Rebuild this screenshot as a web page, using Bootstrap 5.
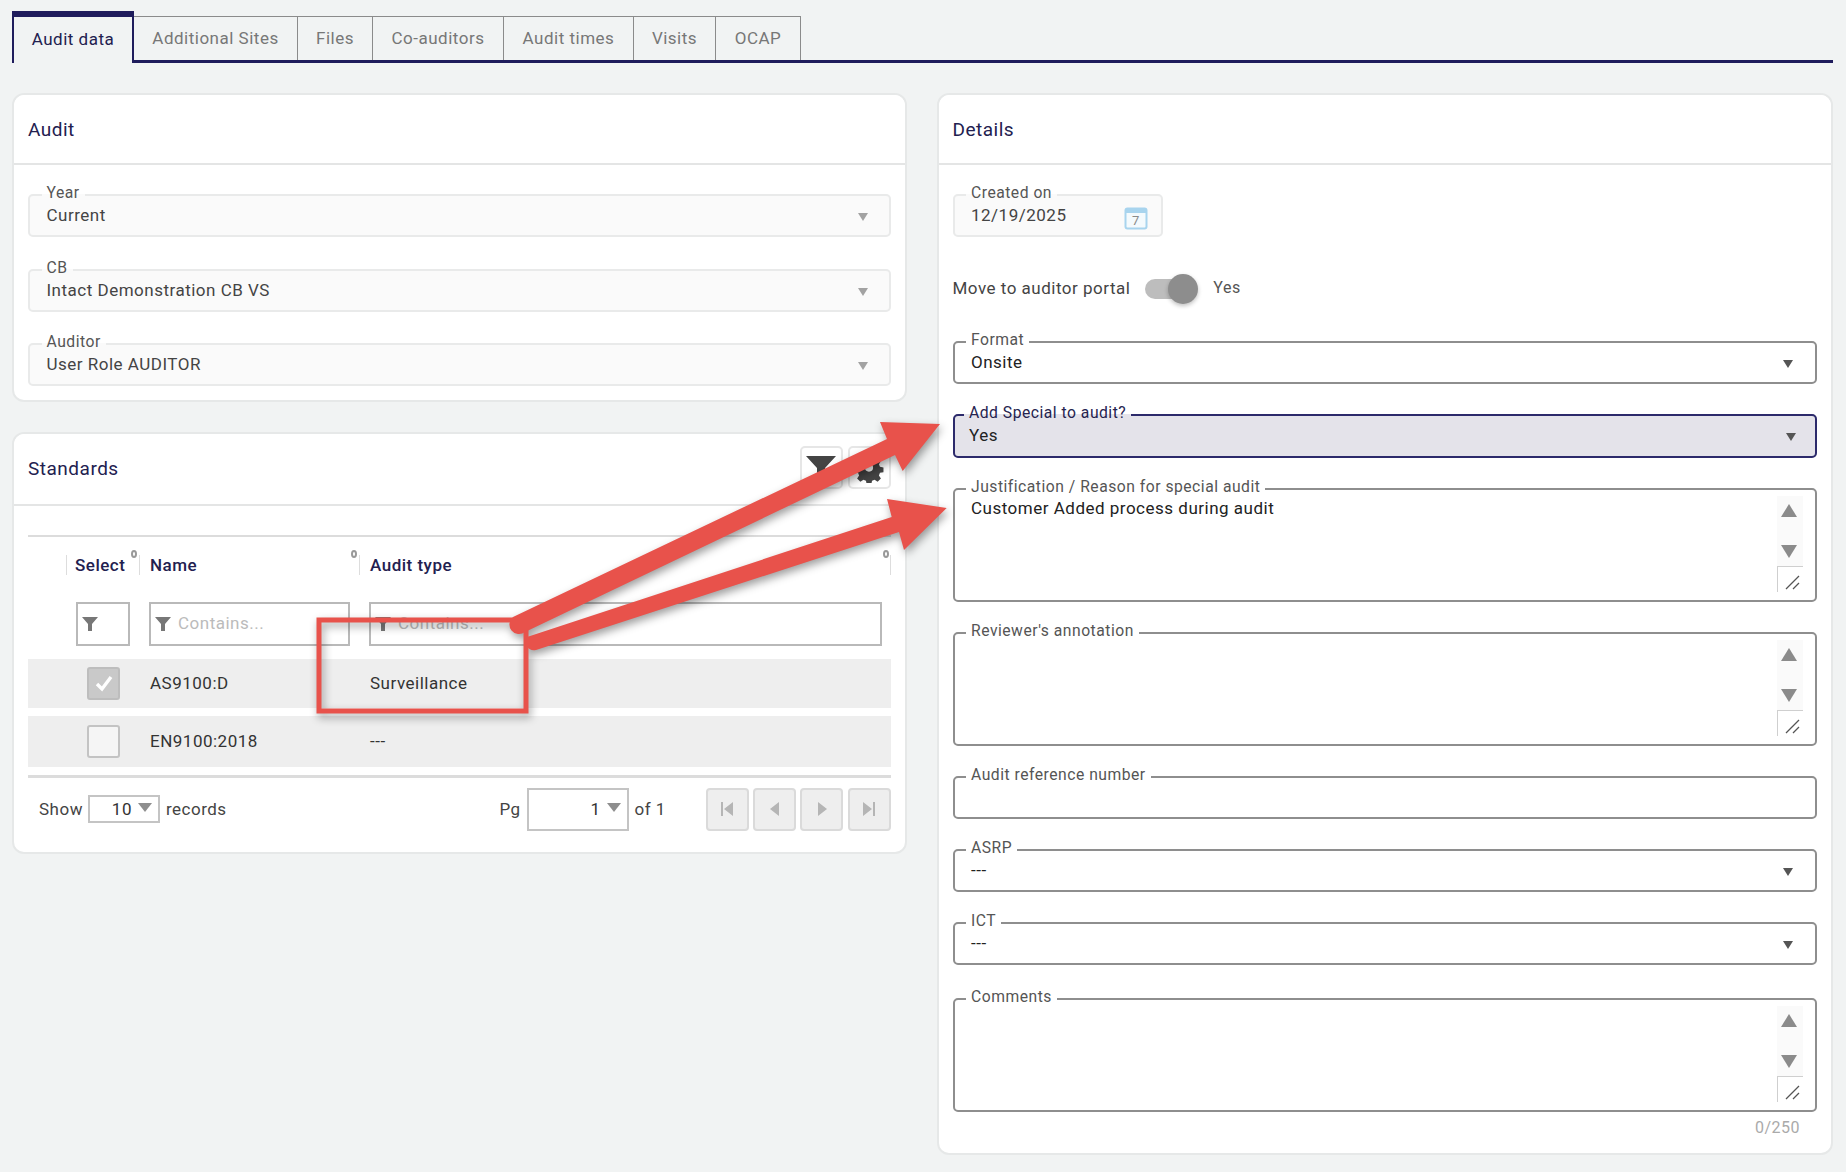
<!DOCTYPE html>
<html lang="en">
<head>
    <meta charset="UTF-8">
    <meta name="viewport" content="width=device-width, initial-scale=1">
    <title>Audit data</title>
    <link href="https://cdn.jsdelivr.net/npm/bootstrap@5.3.2/dist/css/bootstrap.min.css" rel="stylesheet">
    <style>
        html, body { height: 100%; }
        body {
            background-color: #f1f3f3;
            font-family: Roboto, "Liberation Sans", sans-serif;
            font-size: 17px;
            letter-spacing: .5px;
            color: #333;
            overflow: hidden;
        }
        .audit-page { position: relative; padding: 11px 13px 0 12px; height: 1172px; }

        /* tabs */
        .audit-tabs { border-bottom: 3px solid #1f1c5c; height: 52px; flex-wrap: nowrap; align-items: flex-end; }
        .audit-tabs .nav-link {
            height: 44px; margin: 0; padding: 0; line-height: 42px; border-radius: 0; text-align: center;
            background: #f1f3f3; color: #777; border: 1.5px solid #8b8b8b; border-bottom: 0; border-left-width: 0;
        }
        .audit-tabs .nav-link.active {
            height: 52px; width: 122px; padding: 1px 0 0 0; margin-bottom: -3px;
            color: #22204f; border: 2px solid #1f1c5c; border-top: 6px solid #1f1c5c; border-bottom: 0;
            background: #f1f3f3; line-height: 42px;
        }
        .tab-a { width: 164px; } .tab-b { width: 75px; } .tab-c { width: 131px; }
        .tab-d { width: 130px; } .tab-e { width: 82px; } .tab-f { width: 85px; }

        .side-cols { gap: 30px; margin-top: 30px; }
        .side-left { flex: 0 0 894.5px; min-width: 0; }
        .side-right { flex: 1 1 0; min-width: 0; }

        /* cards */
        .panel { border: 2px solid #e6e8e8; border-radius: 12px; background: #fff; }
        .panel .card-header {
            background: #fff; border-bottom: 2px solid #e4e5e5; height: 70px; padding: 2px 14px 0;
            color: #22204f; font-size: 19px; display: flex; align-items: center; border-radius: 11px 11px 0 0;
        }
        .panel .card-body { padding: 20px 14px 14px; }
        .standards-card { margin-top: 29.5px; }
        .standards-card .card-header { height: 72px; padding-top: 0; }

        /* outlined fields */
        .fields { display: flex; flex-direction: column; gap: 22.7px; }
        .fields-right { gap: 21px; }
        .fld {
            border: 2px solid #8e8e8e; border-radius: 5px; padding: 0 16.5px 10px; background: #fff;
            position: relative; line-height: 20px; color: #222;
        }
        .fld > legend {
            float: none; width: auto; font-size: 15.7px; line-height: 16px; color: #555;
            margin: 0 0 0 -5px; padding: 0 5px 4px 5px;
        }
        .fld-read { border-color: #e9eaea; background: #fafafa; color: #444; }
        .fld-active { border-color: #2c2a6b; background: #e4e3ea; padding-bottom: 11px; }
        .fld-active > legend { color: #26244f; margin-left: -7px; }
        .fld-active > .fld-val { margin-left: -2px; }
        .fld-val { height: 20px; }
        .fld-area { padding-bottom: 0; height: 123px; }
        .fld-area > .fld-val { margin-top: -1.5px; }
        .fld-last { margin-top: 3px; }
        .fld-date { width: 210px; }
        .date-ico { right: 13px; top: 2px; }
        .caret-down {
            position: absolute; right: 22px; top: 8px; width: 0; height: 0;
            border-left: 5px solid transparent; border-right: 5px solid transparent; border-top: 8px solid #555;
        }
        .fld-read .caret-down { border-top-color: #a2a2a2; right: 21px; }
        .fld-active .caret-down { right: 19px; }

        .fake-scroll { position: absolute; right: 12px; top: -3px; width: 26px; height: 96px; background: #fafafa; }
        .fake-scroll .up, .fake-scroll .dn { position: absolute; left: 4px; width: 0; height: 0; border-left: 8.5px solid transparent; border-right: 8.5px solid transparent; }
        .fake-scroll .up { top: 8px; border-bottom: 13px solid #8b8b8b; }
        .fake-scroll .dn { top: 49px; border-top: 13px solid #8b8b8b; }
        .grip { position: absolute; left: 0; bottom: 0; width: 26px; height: 26px; background: #fff; border: 1.5px solid #cfcfcf; border-width: 1.5px 0 0 1.5px; }
        .grip svg { display: block; position: absolute; right: 2px; bottom: 2px; }

        .portal-row { height: 40px; margin: 32px 0 23px; position: relative; }
        .toggle-track { width: 43px; height: 20px; border-radius: 10px; background: #bdbdbd; margin-left: 15px; position: relative; flex: none; }
        .toggle-knob { position: absolute; right: -10px; top: -5px; width: 30px; height: 30px; border-radius: 50%; background: #8d8d8d; box-shadow: 0 2px 4px rgba(0,0,0,.25); }
        .portal-yes { margin-left: 25px; margin-top: -3px; color: #555; font-size: 16px; }
        .portal-lab { color: #444; }
        .char-count { text-align: right; color: #aaa; margin: 6px 17px 1px 0; line-height: 20px; font-size: 16px; }

        /* standards */
        .panel-btn { width: 43px; height: 43px; border: 2px solid #e6e6e6; border-radius: 5px; background: #fff; padding: 0; }
        .panel-btns { gap: 5px; margin-top: -3px; }
        .std-wrap { margin-top: 29px; }
        .std-table { table-layout: fixed; border-collapse: separate; border-spacing: 0; margin: 0; width: 100%; border-top: 2px solid #dcdcdc; }
        .std-table > :not(caption) > * > * { padding: 0; border: 0; box-shadow: none; }
        .std-table thead th { height: 55px; font-weight: 500; color: #22204f; padding: 2px 0 0 11px; position: relative; vertical-align: middle; font-size: 17px; }
        .std-table thead th.th-first { padding-left: 9px; }
        .std-table .th-sep::before { content: ""; position: absolute; left: 0; top: 18px; height: 20px; border-left: 1.5px solid #ddd; }
        .std-table .th-last::after { content: ""; position: absolute; right: 0; top: 18px; height: 20px; border-left: 1.5px solid #ddd; }
        .col-grip { position: absolute; right: 2px; top: 13px; width: 6px; height: 8px; border: 2px solid #999; border-radius: 50%; }
        .filter-row td { height: 67px; padding: 10px 0 13px !important; vertical-align: top; }
        .filter-box { height: 44px; border: 2px solid #b9b9b9; margin: 0 9px 0 10px; display: flex; align-items: center; gap: 7px; padding-left: 4px; color: #bbb; background: #fff; }
        .std-table tbody .data-row td { --bs-table-bg: #eeeeee; background-clip: padding-box; border-bottom: 8px solid #fff; vertical-align: middle; color: #333; }
        .std-table tbody .data-row td.cell-txt { padding-left: 11px; }
        .row-a td { height: 57px; } .row-b td { height: 59px; }
        .chk { width: 33px; height: 33px; border: 2px solid #c3c3c3; border-radius: 3px; background: #f5f5f5; margin-left: 21px; display: flex; align-items: center; justify-content: center; }
        .chk-on { background: #c9c9c9; border-color: #bdbdbd; }
        .std-foot { border-top: 3px solid #dcdcdc; padding-top: 10px; height: 77px; color: #444; }
        .foot-part { height: 43px; }
        .foot-show { padding-left: 11px; }
        .show-sel { width: 72px; height: 28px; border: 2px solid #c4c4c4; margin: 0 6px 0 5px; display: flex; align-items: center; justify-content: flex-end; padding-right: 6px; gap: 6px; background: #fff; color: #333; }
        .page-sel { width: 102px; height: 43px; border: 2px solid #c4c4c4; margin: 0 6px 0 6px; display: flex; align-items: center; justify-content: flex-end; padding-right: 6px; gap: 6px; background: #fff; color: #333; }
        .tri-sm { width: 0; height: 0; border-left: 7px solid transparent; border-right: 7px solid transparent; border-top: 9px solid #8e8e8e; margin-top: -3px; }
        .pg-btn { width: 43px; height: 43px; border: 2px solid #dadada; border-radius: 4px; background: #eeeeee; padding: 0; display: flex; align-items: center; justify-content: center; }
        .pg-btns { gap: 4.2px; margin-left: 40px; }

        .callouts { position: absolute; left: 0; top: 0; width: 1846px; height: 1172px; pointer-events: none; filter: drop-shadow(2px 4px 4px rgba(0,0,0,.38)); }
    </style>
</head>
<body>
<div class="audit-page">
    <ul class="nav nav-tabs audit-tabs">
        <li class="nav-item"><a class="nav-link active" href="#">Audit data</a></li>
        <li class="nav-item"><a class="nav-link tab-a" href="#">Additional Sites</a></li>
        <li class="nav-item"><a class="nav-link tab-b" href="#">Files</a></li>
        <li class="nav-item"><a class="nav-link tab-c" href="#">Co-auditors</a></li>
        <li class="nav-item"><a class="nav-link tab-d" href="#">Audit times</a></li>
        <li class="nav-item"><a class="nav-link tab-e" href="#">Visits</a></li>
        <li class="nav-item"><a class="nav-link tab-f" href="#">OCAP</a></li>
    </ul>

    <div class="d-flex align-items-start side-cols">
        <!-- left -->
        <div class="side-left">
            <div class="card panel">
                <div class="card-header">Audit</div>
                <div class="card-body">
                    <div class="fields">
                        <fieldset class="fld fld-read"><legend>Year</legend><div class="fld-val">Current</div><span class="caret-down"></span></fieldset>
                        <fieldset class="fld fld-read"><legend>CB</legend><div class="fld-val">Intact Demonstration CB VS</div><span class="caret-down"></span></fieldset>
                        <fieldset class="fld fld-read"><legend>Auditor</legend><div class="fld-val">User Role AUDITOR</div><span class="caret-down"></span></fieldset>
                    </div>
                </div>
            </div>

            <div class="card panel standards-card">
                <div class="card-header justify-content-between">
                    <span>Standards</span>
                    <span class="d-flex panel-btns">
                        <button class="panel-btn" type="button">
                            <svg width="30" height="26" viewBox="0 0 30 26"><path d="M0 1h30L19 13v10h-8V13z" fill="#444"/></svg>
                        </button>
                        <button class="panel-btn" type="button">
                            <svg width="32" height="32" viewBox="0 0 24 24"><path fill="#444" fill-rule="evenodd" d="M10 2h4l.6 3 2.2.9 2.6-1.7 2.8 2.8-1.7 2.6.9 2.2 3 .6v4l-3 .6-.9 2.2 1.7 2.6-2.8 2.8-2.6-1.7-2.2.9-.6 3h-4l-.6-3-2.2-.9-2.6 1.7-2.8-2.8 1.7-2.6-.9-2.2-3-.6v-4l3-.6.9-2.2-1.7-2.6 2.8-2.8 2.6 1.7 2.2-.9zM12 9a3.5 3.5 0 1 0 0 7 3.5 3.5 0 0 0 0-7z" transform="translate(1.5 1.5) scale(.875)"/></svg>
                        </button>
                    </span>
                </div>
                <div class="card-body pt-0 pb-0">
                    <div class="std-wrap">
                        <table class="table std-table">
                            <colgroup><col style="width:38px"><col style="width:73px"><col style="width:220px"><col></colgroup>
                            <thead>
                                <tr>
                                    <th></th>
                                    <th class="th-sep th-first">Select<span class="col-grip"></span></th>
                                    <th class="th-sep">Name<span class="col-grip"></span></th>
                                    <th class="th-sep th-last">Audit type<span class="col-grip"></span></th>
                                </tr>
                            </thead>
                            <tbody>
                                <tr class="filter-row">
                                    <td></td>
                                    <td><div class="filter-box"><svg width="16" height="16" viewBox="0 0 16 16"><path d="M0 1h16L10 8v7H6V8z" fill="#777"/></svg></div></td>
                                    <td><div class="filter-box"><svg width="16" height="16" viewBox="0 0 16 16"><path d="M0 1h16L10 8v7H6V8z" fill="#777"/></svg>Contains...</div></td>
                                    <td><div class="filter-box"><svg width="16" height="16" viewBox="0 0 16 16"><path d="M0 1h16L10 8v7H6V8z" fill="#777"/></svg>Contains...</div></td>
                                </tr>
                                <tr class="data-row row-a">
                                    <td></td>
                                    <td><div class="chk chk-on"><svg width="20" height="18" viewBox="0 0 20 18"><path d="M3 10l5 5 9-12" fill="none" stroke="#fff" stroke-width="3.4"/></svg></div></td>
                                    <td class="cell-txt">AS9100:D</td>
                                    <td class="cell-txt">Surveillance</td>
                                </tr>
                                <tr class="data-row row-b">
                                    <td></td>
                                    <td><div class="chk"></div></td>
                                    <td class="cell-txt">EN9100:2018</td>
                                    <td class="cell-txt">---</td>
                                </tr>
                            </tbody>
                        </table>
                        <div class="std-foot d-flex align-items-start">
                            <div class="d-flex align-items-center foot-part foot-show">Show<span class="show-sel">10 <span class="tri-sm"></span></span>records</div>
                            <div class="d-flex align-items-center ms-auto foot-part">Pg<span class="page-sel">1 <span class="tri-sm"></span></span>of 1
                                <span class="d-flex pg-btns">
                                    <button class="pg-btn" type="button"><svg width="16" height="16" viewBox="0 0 16 16"><path d="M2 1h2v14H2zM14 1v14L5 8z" fill="#b5b5b5"/></svg></button>
                                    <button class="pg-btn" type="button"><svg width="16" height="16" viewBox="0 0 16 16"><path d="M12 1v14L3 8z" fill="#b5b5b5"/></svg></button>
                                    <button class="pg-btn" type="button"><svg width="16" height="16" viewBox="0 0 16 16"><path d="M4 1v14l9-7z" fill="#b5b5b5"/></svg></button>
                                    <button class="pg-btn" type="button"><svg width="16" height="16" viewBox="0 0 16 16"><path d="M12 1h2v14h-2zM2 1v14l9-7z" fill="#b5b5b5"/></svg></button>
                                </span>
                            </div>
                        </div>
                    </div>
                </div>
            </div>
        </div>

        <!-- right -->
        <div class="side-right">
            <div class="card panel">
                <div class="card-header">Details</div>
                <div class="card-body">
                    <fieldset class="fld fld-read fld-date">
                        <legend>Created on</legend>
                        <div class="fld-val">12/19/2025</div>
                        <svg class="position-absolute date-ico" width="24" height="23" viewBox="0 0 24 23"><rect x="1.5" y="1.5" width="21" height="20" rx="2" fill="#f4fafd" stroke="#a8d4ee" stroke-width="2"/><rect x="2" y="2" width="20" height="4" fill="#a8d4ee"/><text x="12" y="18" font-size="13" font-family="Roboto" text-anchor="middle" fill="#8a8a8a">7</text></svg>
                    </fieldset>
                    <div class="portal-row d-flex align-items-center">
                        <span class="portal-lab">Move to auditor portal</span>
                        <span class="toggle-track"><span class="toggle-knob"></span></span>
                        <span class="portal-yes">Yes</span>
                    </div>
                    <div class="fields fields-right">
                        <fieldset class="fld"><legend>Format</legend><div class="fld-val">Onsite</div><span class="caret-down"></span></fieldset>
                        <fieldset class="fld fld-active"><legend>Add Special to audit?</legend><div class="fld-val">Yes</div><span class="caret-down"></span></fieldset>
                        <fieldset class="fld fld-area"><legend>Justification / Reason for special audit</legend><div class="fld-val">Customer Added process during audit</div>
                            <div class="fake-scroll"><span class="up"></span><span class="dn"></span><span class="grip"><svg width="16" height="16" viewBox="0 0 16 16"><path d="M1 15L14 2M8 15l6-6" stroke="#555" stroke-width="1.3"/></svg></span></div>
                        </fieldset>
                        <fieldset class="fld fld-area"><legend>Reviewer's annotation</legend>
                            <div class="fake-scroll"><span class="up"></span><span class="dn"></span><span class="grip"><svg width="16" height="16" viewBox="0 0 16 16"><path d="M1 15L14 2M8 15l6-6" stroke="#555" stroke-width="1.3"/></svg></span></div>
                        </fieldset>
                        <fieldset class="fld"><legend>Audit reference number</legend><div class="fld-val"></div></fieldset>
                        <fieldset class="fld"><legend>ASRP</legend><div class="fld-val">---</div><span class="caret-down"></span></fieldset>
                        <fieldset class="fld"><legend>ICT</legend><div class="fld-val">---</div><span class="caret-down"></span></fieldset>
                        <fieldset class="fld fld-area fld-last"><legend>Comments</legend>
                            <div class="fake-scroll"><span class="up"></span><span class="dn"></span><span class="grip"><svg width="16" height="16" viewBox="0 0 16 16"><path d="M1 15L14 2M8 15l6-6" stroke="#555" stroke-width="1.3"/></svg></span></div>
                        </fieldset>
                    </div>
                    <div class="char-count">0/250</div>
                </div>
            </div>
        </div>
    </div>

    <!-- annotation drawn on top of the screenshot -->
    <svg class="callouts" viewBox="0 0 1846 1172">
        <rect x="319" y="620" width="207" height="91" fill="none" stroke="#e8524b" stroke-width="5"/>
        <path d="M513 617L887 439L880 422L940 424L902.7 471L895 455L525 632A9.6 9.6 0 0 1 513 617Z" fill="#e8524b"/>
        <path d="M527 637L891.7 517L887 499L946.7 508L904 550L899 532L536 650A8.5 8.5 0 0 1 527 637Z" fill="#e8524b"/>
    </svg>
</div>
<script src="https://cdn.jsdelivr.net/npm/bootstrap@5.3.2/dist/js/bootstrap.bundle.min.js"></script>
</body>
</html>
